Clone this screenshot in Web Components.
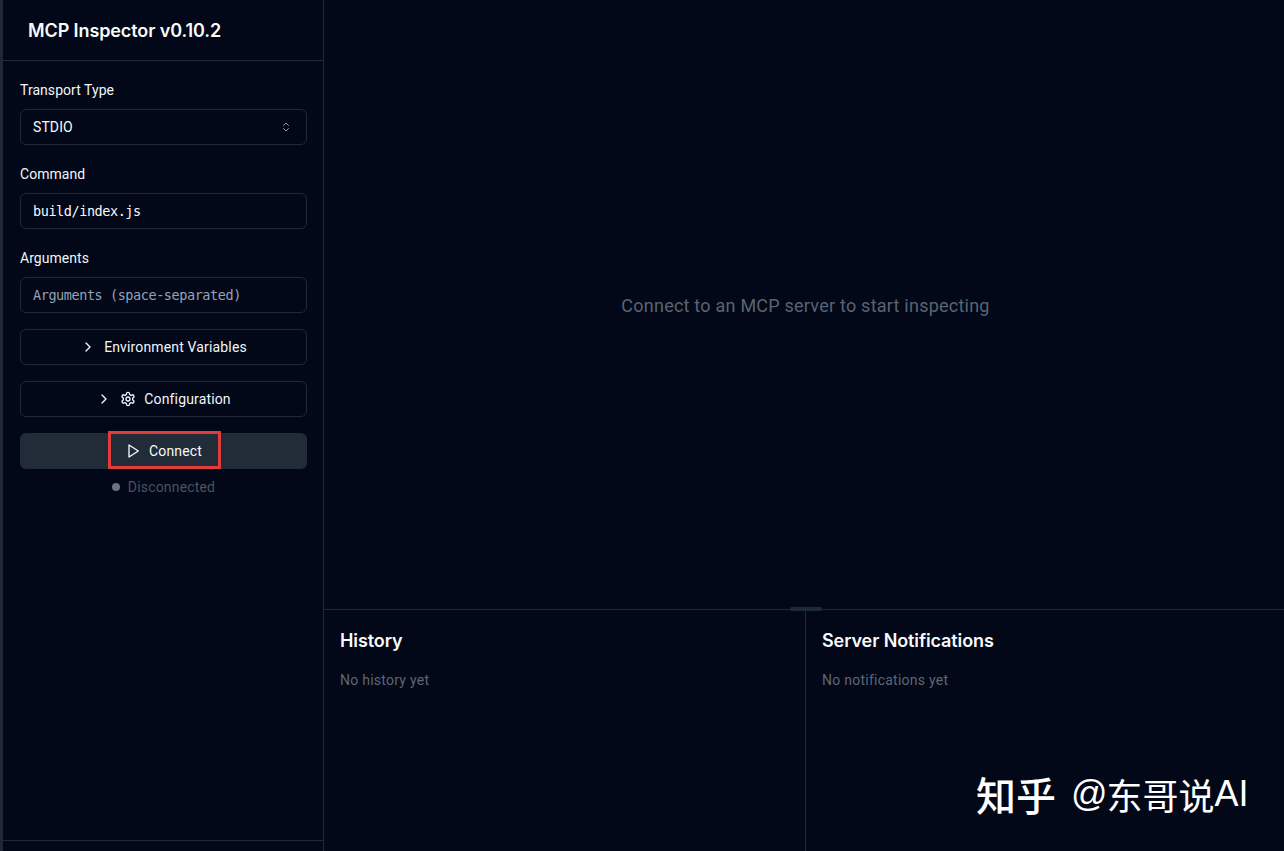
<!DOCTYPE html>
<html lang="zh">
<head>
<meta charset="utf-8">
<title>MCP Inspector</title>
<style>
html,body{margin:0;height:100%;background:#020817;}
body{font-family:Roboto,Inter,"Noto Sans","Noto Sans CJK SC",sans-serif;color:#f8fafc;overflow:hidden;}
</style>
</head>
<body>
<app-shell>
  <side-bar slot="side" title-text="MCP Inspector v0.10.2">
    <form-field label="Transport Type"><select-box value="STDIO"></select-box></form-field>
    <form-field label="Command"><text-box value="build/index.js"></text-box></form-field>
    <form-field label="Arguments" tight><text-box placeholder="Arguments (space-separated)"></text-box></form-field>
    <outline-button><svg slot="icon" width="16" height="16" viewBox="0 0 24 24" fill="none" stroke="currentColor" stroke-width="2" stroke-linecap="round" stroke-linejoin="round"><path d="m9 18 6-6-6-6"/></svg>Environment Variables</outline-button>
    <outline-button><svg slot="icon" width="16" height="16" viewBox="0 0 24 24" fill="none" stroke="currentColor" stroke-width="2" stroke-linecap="round" stroke-linejoin="round"><path d="m9 18 6-6-6-6"/></svg><svg slot="icon" style="margin-left:8px" width="16" height="16" viewBox="0 0 24 24" fill="none" stroke="currentColor" stroke-width="2" stroke-linecap="round" stroke-linejoin="round"><path d="M12.22 2h-.44a2 2 0 0 0-2 2v.18a2 2 0 0 1-1 1.73l-.43.25a2 2 0 0 1-2 0l-.15-.08a2 2 0 0 0-2.73.73l-.22.38a2 2 0 0 0 .73 2.73l.15.1a2 2 0 0 1 1 1.72v.51a2 2 0 0 1-1 1.74l-.15.09a2 2 0 0 0-.73 2.73l.22.38a2 2 0 0 0 2.73.73l.15-.08a2 2 0 0 1 2 0l.43.25a2 2 0 0 1 1 1.73V20a2 2 0 0 0 2 2h.44a2 2 0 0 0 2-2v-.18a2 2 0 0 1 1-1.73l.43-.25a2 2 0 0 1 2 0l.15.08a2 2 0 0 0 2.73-.73l.22-.39a2 2 0 0 0-.73-2.73l-.15-.08a2 2 0 0 1-1-1.74v-.5a2 2 0 0 1 1-1.74l.15-.09a2 2 0 0 0 .73-2.73l-.22-.38a2 2 0 0 0-2.73-.73l-.15.08a2 2 0 0 1-2 0l-.43-.25a2 2 0 0 1-1-1.73V4a2 2 0 0 0-2-2z"/><circle cx="12" cy="12" r="3"/></svg>Configuration</outline-button>
    <connect-button>Connect</connect-button>
    <status-line>Disconnected</status-line>
  </side-bar>
  <main-area slot="main">
    <info-panel heading="History" empty="No history yet"></info-panel>
    <info-panel heading="Server Notifications" empty="No notifications yet" divided></info-panel>
  </main-area>
</app-shell>
<script>
function def(name, css, html, init){
  customElements.define(name, class extends HTMLElement{
    constructor(){super();this.attachShadow({mode:'open'}).innerHTML='<style>'+css+'</style>'+html;}
    connectedCallback(){if(init)init.call(this,this.shadowRoot);}
  });
}
def('app-shell',`
  :host{display:flex;height:851px;background:#020817;position:relative;}
  .strip{flex:none;width:3px;background:#1f2836;}
  .mark{position:absolute;left:976px;top:769px;font:400 36px/50px "Noto Sans CJK SC","Liberation Sans",sans-serif;color:#fff;white-space:nowrap;display:flex;align-items:center;}
  .mark i{font-style:normal;font-weight:500;font-size:40px;margin-right:15px;}
  .mark b{font:400 36px/50px "Liberation Sans",sans-serif;}
  .mark span{margin-left:-1px;}
`,`<div class="strip"></div><slot name="side"></slot><slot name="main"></slot>
  <div class="mark"><i>知乎</i><b>@</b><span>东哥说</span><b>AI</b></div>`);
def('side-bar',`
  :host{display:flex;flex-direction:column;flex:none;width:321px;box-sizing:border-box;border-right:1px solid #1e293b;}
  header{height:60px;border-bottom:1px solid #1e293b;display:flex;align-items:center;padding-left:25px;font:600 18px Inter,sans-serif;letter-spacing:-.1px;color:#f8fafc;}
  .body{flex:1;padding:19px 16px 0 17px;display:flex;flex-direction:column;}
  footer{height:10px;border-top:1px solid #1e293b;}
`,`<header></header><div class="body"><slot></slot></div><footer></footer>`,function(r){r.querySelector('header').textContent=this.getAttribute('title-text');});
def('form-field',`
  :host{display:block;margin-bottom:19px;}
  :host([tight]){margin-bottom:16px;}
  label{display:block;font-size:14px;line-height:20px;font-weight:450;letter-spacing:.05px;color:#f1f5f9;margin-bottom:9px;}
`,`<label></label><slot></slot>`,function(r){r.querySelector('label').textContent=this.getAttribute('label');});
def('select-box',`
  :host{display:flex;align-items:center;justify-content:space-between;height:36px;box-sizing:border-box;border:1px solid #1e293b;border-radius:6px;padding:0 12px;font-size:14px;letter-spacing:.1px;color:#f8fafc;}
  svg{opacity:.6;width:12px;height:12px;margin-right:2px;}
`,`<span></span><svg viewBox="0 0 24 24" fill="none" stroke="currentColor" stroke-width="2" stroke-linecap="round" stroke-linejoin="round"><path d="m7 15 5 5 5-5"/><path d="m7 9 5-5 5 5"/></svg>`,function(r){r.querySelector('span').textContent=this.getAttribute('value');});
def('text-box',`
  :host{display:flex;align-items:center;height:36px;box-sizing:border-box;border:1px solid #1e293b;border-radius:6px;padding:0 12px;font:13.5px "DejaVu Sans Mono",monospace;letter-spacing:-.43px;color:#f8fafc;}
  .ph{color:#94a3b8;}
`,`<span></span>`,function(r){const s=r.querySelector('span');const v=this.getAttribute('value');if(v){s.textContent=v;}else{s.textContent=this.getAttribute('placeholder');s.className='ph';}});
def('outline-button',`
  :host{display:flex;align-items:center;justify-content:center;height:36px;box-sizing:border-box;border:1px solid #1e293b;border-radius:6px;font-size:14px;font-weight:450;letter-spacing:.15px;color:#f1f5f9;margin-bottom:16px;}
  .i{display:inline-flex;align-items:center;margin-right:8px;}
`,`<span class="i"><slot name="icon"></slot></span><slot></slot>`);
def('connect-button',`
  :host{display:flex;align-items:center;justify-content:center;height:36px;border-radius:6px;background:#222b38;font-size:14px;font-weight:450;letter-spacing:.15px;color:#f8fafc;position:relative;}
  svg{margin-right:8px}
  .hl{position:absolute;left:88px;top:-2px;width:113px;height:38px;box-sizing:border-box;border:3px solid #e13b3b;}
`,`<svg width="16" height="16" viewBox="0 0 24 24" fill="none" stroke="currentColor" stroke-width="2" stroke-linecap="round" stroke-linejoin="round"><polygon points="6 3 20 12 6 21 6 3"/></svg><slot></slot><div class="hl"></div>`);
def('status-line',`
  :host{display:flex;align-items:center;justify-content:center;gap:8px;margin-top:8px;height:20px;font-size:14px;letter-spacing:.17px;color:#4b5261;}
  i{width:8px;height:8px;border-radius:50%;background:#6b7280;}
`,`<i></i><slot></slot>`);
def('main-area',`
  :host{display:flex;flex-direction:column;flex:1;min-width:0;}
  .empty{height:609px;box-sizing:border-box;padding:2px 0 0 3px;display:flex;align-items:center;justify-content:center;font-size:18px;letter-spacing:.23px;color:#5b6372;flex:none;}
  .bottom{flex:1;display:grid;grid-template-columns:481px 1fr;border-top:1px solid #1e293b;position:relative;}
  .handle{position:absolute;left:466px;top:-3px;width:32px;height:4px;border-radius:2px;background:#1e293b;}
`,`<div class="empty">Connect to an MCP server to start inspecting</div><div class="bottom"><div class="handle"></div><slot></slot></div>`);
def('info-panel',`
  :host{display:block;padding:17px 16px 16px;box-sizing:border-box;}
  :host([divided]){border-left:1px solid #1e293b;}
  h2{margin:0 0 14px;font:600 18px/28px Inter,sans-serif;letter-spacing:-.1px;color:#f8fafc;}
  p{margin:0;font-size:14px;line-height:22px;letter-spacing:.25px;color:#5f6675;}
`,`<h2></h2><p></p>`,function(r){r.querySelector('h2').textContent=this.getAttribute('heading');r.querySelector('p').textContent=this.getAttribute('empty');});
</script>
</body>
</html>
